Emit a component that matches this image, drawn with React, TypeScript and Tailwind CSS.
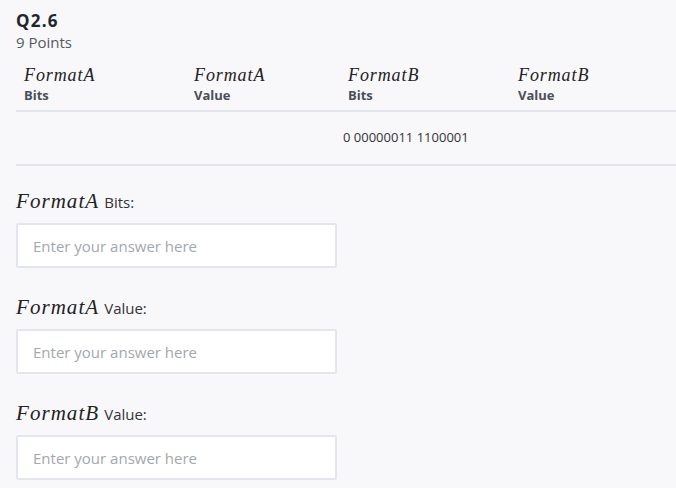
import type { ReactNode } from 'react';

const sans = { fontFamily: '"Open Sans", Lato, sans-serif' };

function MathVar({ children, size }: { children: ReactNode; size: string }) {
  return (
    <span
      className={`italic text-[#222] tracking-[0.05em] ${size}`}
      style={{ fontFamily: '"Liberation Serif", "DejaVu Serif", serif' }}
    >
      {children}
    </span>
  );
}

function HeaderCell({ name, sub, width }: { name: string; sub: string; width: string }) {
  return (
    <div className={`${width} shrink-0 pl-2 flex flex-col`}>
      <MathVar size="text-[18px] leading-[22px]">{name}</MathVar>
      <span className="text-[13px] font-bold text-[#4a4f57] leading-[17px] mt-[1px]">{sub}</span>
    </div>
  );
}

function AnswerField({ name, label }: { name: string; label: string }) {
  return (
    <div className="flex flex-col">
      <label className="flex items-baseline gap-[5px] h-[26px]">
        <MathVar size="text-[21px] leading-[26px]">{name}</MathVar>
        <span className="text-[15px] text-[#333]">{label}</span>
      </label>
      <input
        type="text"
        placeholder="Enter your answer here"
        className="mt-[9px] w-[321px] h-[45px] bg-white border-2 border-[#e3e6ec] rounded-[2px] px-[15px] text-[15px] placeholder:text-[#a3a7ae] outline-none"
      />
    </div>
  );
}

export default function App() {
  return (
    <div className="min-h-[488px] bg-[#f8f8fb] pl-4 pt-[10px] overflow-hidden" style={sans}>
      <h2 className="text-[17px] font-bold text-[#1d262b] leading-[22px] tracking-[0.07em]">Q2.6</h2>
      <p className="text-[15px] text-[#555a60] leading-[20px]">9 Points</p>

      <div className="mt-[12px] w-[700px]">
        <div className="flex pb-[6px] border-b-2 border-[#e3e6ec]">
          <HeaderCell name="FormatA" sub="Bits" width="w-[170px]" />
          <HeaderCell name="FormatA" sub="Value" width="w-[154px]" />
          <HeaderCell name="FormatB" sub="Bits" width="w-[170px]" />
          <HeaderCell name="FormatB" sub="Value" width="w-[170px]" />
        </div>
        <div className="flex h-[54px] items-center border-b-2 border-[#e3e6ec]">
          <div className="w-[170px]" />
          <div className="w-[154px]" />
          <div className="pl-[3px] text-[13px] text-[#333]">0 00000011 1100001</div>
        </div>
      </div>

      <div className="mt-[22px] flex flex-col gap-[26px]">
        <AnswerField name="FormatA" label="Bits:" />
        <AnswerField name="FormatA" label="Value:" />
        <AnswerField name="FormatB" label="Value:" />
      </div>
    </div>
  );
}
